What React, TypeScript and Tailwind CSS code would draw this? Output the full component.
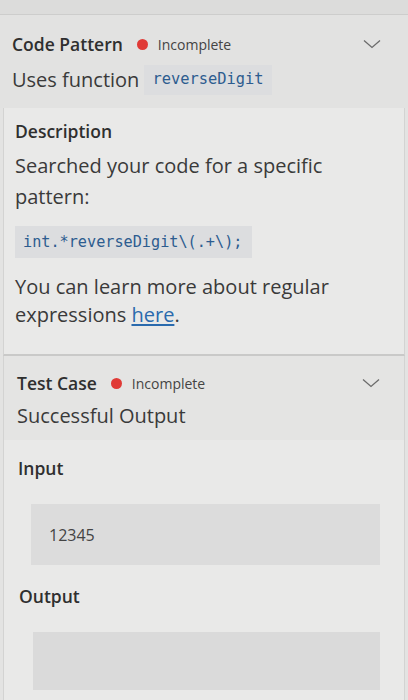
import React from "react";

const sans = { fontFamily: '"Open Sans", "Noto Sans", sans-serif' };
const mono = { fontFamily: '"DejaVu Sans Mono", "Liberation Mono", monospace' };

function Chevron() {
  return (
    <svg width="18" height="10" viewBox="0 0 18 10" fill="none" className="shrink-0">
      <path d="M1 1.5 L9 8.5 L17 1.5" stroke="#6b6b6b" strokeWidth="1.3" />
    </svg>
  );
}

function Status() {
  return (
    <div className="flex items-center">
      <span className="w-[11px] h-[11px] rounded-full bg-[#e03a36] ml-[14px]" />
      <span className="ml-[10px] text-[14px] text-[#444]">Incomplete</span>
    </div>
  );
}

export default function App() {
  return (
    <div className="w-[408px] h-[700px] overflow-hidden bg-[#e3e3e2] text-[#333]" style={sans}>
      <div className="h-[15px] bg-[#dcdcdb] border-b border-[#cdcdcc]" />
      {/* Section 1 header */}
      <div className="h-[93px] pl-[12px] pr-[27px] pt-[17px] bg-[#e2e2e1]">
        <div className="flex items-center justify-between h-[24px]">
          <div className="flex items-center">
            <span className="text-[17.5px] font-semibold text-[#2f2f2f]">Code Pattern</span>
            <Status />
          </div>
          <Chevron />
        </div>
        <div className="flex items-center h-[30px] mt-[9px]">
          <span className="text-[20px] text-[#3a3a3a]">Uses function</span>
          <span className="ml-[5px] px-[8px] py-[3px] bg-[#dcdddf] text-[15.4px] text-[#2d5c8f]" style={mono}>
            reverseDigit
          </span>
        </div>
      </div>
      {/* Section 1 body */}
      <div className="h-[248px] mx-[3px] bg-[#e9e9e8] border-x border-[#d3d3d2] pl-[11px] pt-[11px] border-b-2 border-b-[#c9c9c8]">
        <div className="h-[24px] leading-[24px] text-[17.5px] font-semibold text-[#2f2f2f]">Description</div>
        <p className="mt-[7px] text-[20px] leading-[31px] text-[#3a3a3a] pr-[60px]">
          Searched your code for a specific pattern:
        </p>
        <div className="mt-[14px] w-[237px] h-[32px] flex items-center pl-[8px] bg-[#dcdddf] text-[15.2px] text-[#2d5c8f]" style={mono}>
          {"int.*reverseDigit\\(.+\\);"}
        </div>
        <div className="mt-[15px] text-[20px] leading-[28px] text-[#3a3a3a]">
          <div>You can learn more about regular</div>
          <div>
            <span>expressions </span>
            <span className="text-[#2a6aad] underline underline-offset-2">here</span>
            <span>.</span>
          </div>
        </div>
      </div>
      {/* Section 2 header */}
      <div className="h-[84px] mx-[3px] pl-[13px] pr-[24px] pt-[15px] bg-[#e4e4e3] border-x border-[#d3d3d2]">
        <div className="flex items-center justify-between h-[24px]">
          <div className="flex items-center">
            <span className="text-[17.5px] font-semibold text-[#2f2f2f]">Test Case</span>
            <Status />
          </div>
          <Chevron />
        </div>
        <div className="h-[30px] leading-[30px] mt-[6px] text-[20px] text-[#3a3a3a]">Successful Output</div>
      </div>
      {/* Section 2 body */}
      <div className="h-[260px] mx-[3px] bg-[#e9e9e8] border-x border-[#d3d3d2] pl-[14px] pr-[24px] pt-[16px]">
        <div className="h-[24px] leading-[24px] text-[17.5px] font-semibold text-[#2f2f2f]">Input</div>
        <div className="mt-[24px] ml-[13px] h-[61px] bg-[#dcdcdc] flex items-center pl-[18px] text-[16px] text-[#444]">
          12345
        </div>
        <div className="mt-[19px] h-[24px] leading-[24px] text-[17.5px] font-semibold text-[#2f2f2f] ml-[1px]">Output</div>
        <div className="mt-[24px] ml-[15px] h-[58px] bg-[#dadada]" />
      </div>
    </div>
  );
}
